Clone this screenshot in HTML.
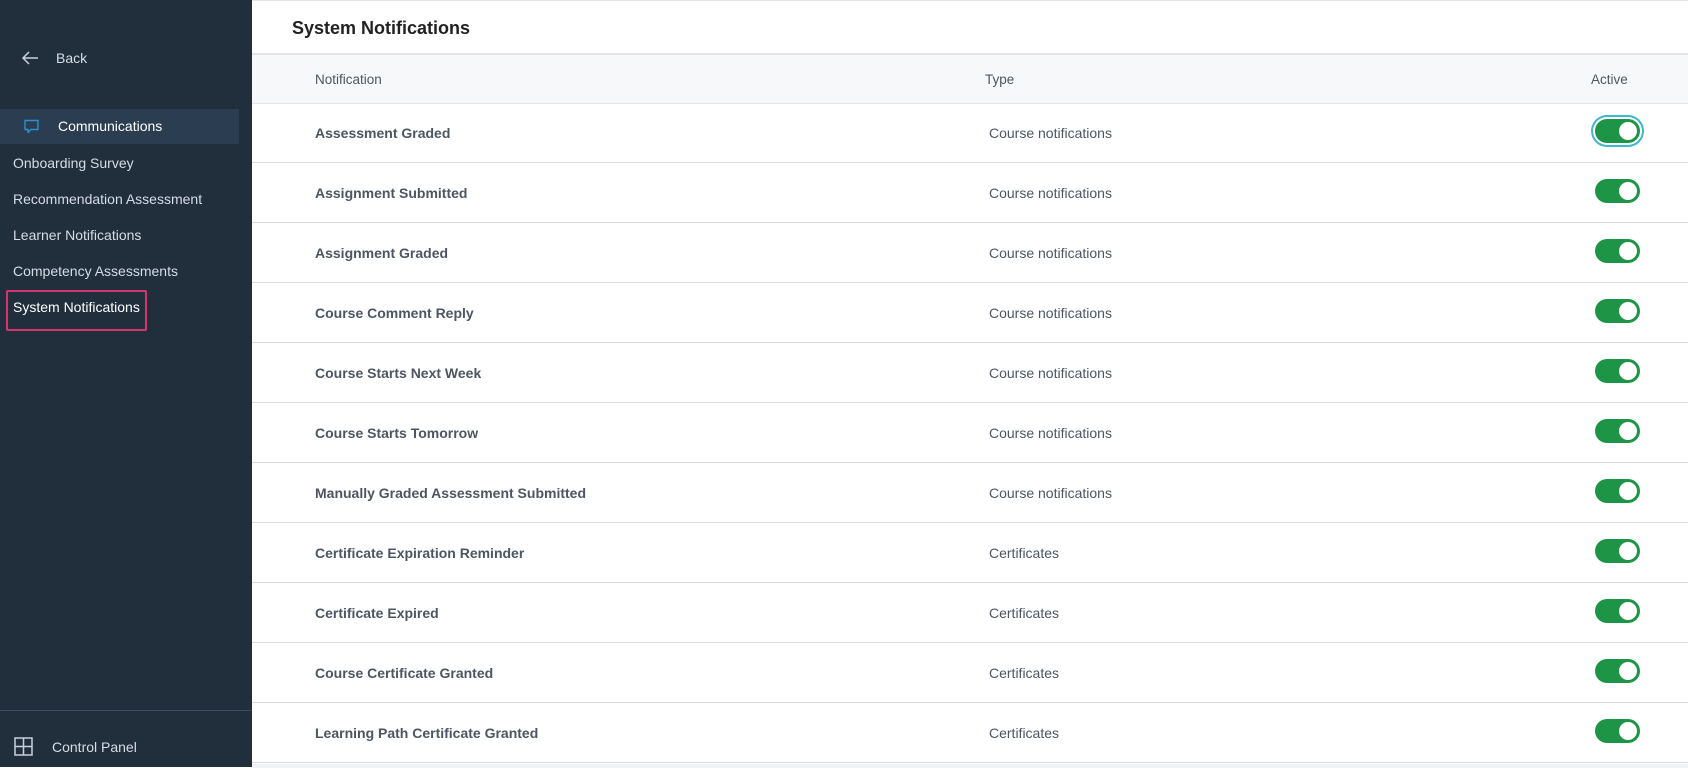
<!DOCTYPE html>
<html><head><meta charset="utf-8"><style>
*{margin:0;padding:0;box-sizing:border-box}
body{width:1688px;height:767px;overflow:hidden;font-family:"Liberation Sans",Arial,sans-serif;background:#fff;position:relative}
.sb{position:absolute;left:0;top:0;width:252px;height:767px;background:#212f3d;color:#d5dde6}
.abs{position:absolute;white-space:nowrap}
.main{position:absolute;left:252px;top:0;right:0;height:767px;border-top:1px solid #e3e5e8}
.row{position:absolute;left:0;right:0;height:60px;border-bottom:1px solid #d9dbde}
.row .n{position:absolute;left:63px;top:1px;line-height:59px;font-size:14px;font-weight:bold;color:#4d5563}
.row .t{position:absolute;left:737px;top:1px;line-height:59px;font-size:14px;color:#4d5563}
.tg{position:absolute;left:1343px;top:16px;width:45px;height:24px;border-radius:12px;background:#1e9447}
.tg::after{content:"";position:absolute;right:3px;top:3px;width:18px;height:18px;border-radius:50%;background:#fff}
</style></head><body>
<div class="sb">
 <svg class="abs" style="left:21px;top:50px" width="18" height="16" viewBox="0 0 18 16"><path d="M17 8H2M8 2L2 8l6 6" stroke="#c9d2dc" stroke-width="1.5" fill="none"/></svg>
 <div class="abs" style="left:56px;top:50px;font-size:14px;color:#d5dde6">Back</div>
 <div class="abs" style="left:0;top:109px;width:239px;height:35px;background:#2b3e51"></div>
 <svg class="abs" style="left:23px;top:119px" width="17" height="16" viewBox="0 0 17 16"><path d="M2 1.5h13v9H8l-3 3v-3H2z" stroke="#2f8fd0" stroke-width="1.4" fill="none" stroke-linejoin="round"/></svg>
 <div class="abs" style="left:58px;top:118px;font-size:14px;color:#fff">Communications</div>
 <div class="abs" style="left:13px;top:155px;font-size:14px">Onboarding Survey</div>
 <div class="abs" style="left:13px;top:191px;font-size:14px">Recommendation Assessment</div>
 <div class="abs" style="left:13px;top:227px;font-size:14px">Learner Notifications</div>
 <div class="abs" style="left:13px;top:263px;font-size:14px">Competency Assessments</div>
 <div class="abs" style="left:6px;top:290px;width:141px;height:41px;border:2.5px solid #d8326f;border-radius:2px"></div>
 <div class="abs" style="left:13px;top:299px;font-size:14px;color:#fff">System Notifications</div>
 <div class="abs" style="left:0;top:710px;width:252px;height:1px;background:#3b4b5c"></div>
 <svg class="abs" style="left:14px;top:737px" width="19" height="19" viewBox="0 0 19 19"><path d="M1 1h17v17H1zM9.5 1v17M1 9.5h17" stroke="#c9d2dc" stroke-width="1.5" fill="none"/></svg>
 <div class="abs" style="left:52px;top:739px;font-size:14px">Control Panel</div>
</div>
<div class="main">
 <div class="abs" style="left:40px;top:17px;font-size:18px;font-weight:bold;color:#222">System Notifications</div>
 <div class="abs" style="left:0;right:0;top:52px;height:51px;background:#f7f8fa;border-top:2px solid #e3e5e8;border-bottom:1px solid #e3e5e8"></div>
 <div class="abs" style="left:63px;top:71px;font-size:13.5px;color:#4d5563">Notification</div>
 <div class="abs" style="left:733px;top:71px;font-size:13.5px;color:#4d5563">Type</div>
 <div class="abs" style="left:1339px;top:71px;font-size:13.5px;color:#4d5563">Active</div>
 <div class="row" style="top:102px"><div class="n">Assessment Graded</div><div class="t">Course notifications</div><div class="tg" style="box-shadow:0 0 0 2px #fff,0 0 0 4px #3cb8cf"></div></div>
 <div class="row" style="top:162px"><div class="n">Assignment Submitted</div><div class="t">Course notifications</div><div class="tg"></div></div>
 <div class="row" style="top:222px"><div class="n">Assignment Graded</div><div class="t">Course notifications</div><div class="tg"></div></div>
 <div class="row" style="top:282px"><div class="n">Course Comment Reply</div><div class="t">Course notifications</div><div class="tg"></div></div>
 <div class="row" style="top:342px"><div class="n">Course Starts Next Week</div><div class="t">Course notifications</div><div class="tg"></div></div>
 <div class="row" style="top:402px"><div class="n">Course Starts Tomorrow</div><div class="t">Course notifications</div><div class="tg"></div></div>
 <div class="row" style="top:462px"><div class="n">Manually Graded Assessment Submitted</div><div class="t">Course notifications</div><div class="tg"></div></div>
 <div class="row" style="top:522px"><div class="n">Certificate Expiration Reminder</div><div class="t">Certificates</div><div class="tg"></div></div>
 <div class="row" style="top:582px"><div class="n">Certificate Expired</div><div class="t">Certificates</div><div class="tg"></div></div>
 <div class="row" style="top:642px"><div class="n">Course Certificate Granted</div><div class="t">Certificates</div><div class="tg"></div></div>
 <div class="row" style="top:702px"><div class="n">Learning Path Certificate Granted</div><div class="t">Certificates</div><div class="tg"></div></div>
 <div class="abs" style="left:0;right:0;top:763px;height:4px;background:#f1f2f4"></div>
</div>
</body></html>
